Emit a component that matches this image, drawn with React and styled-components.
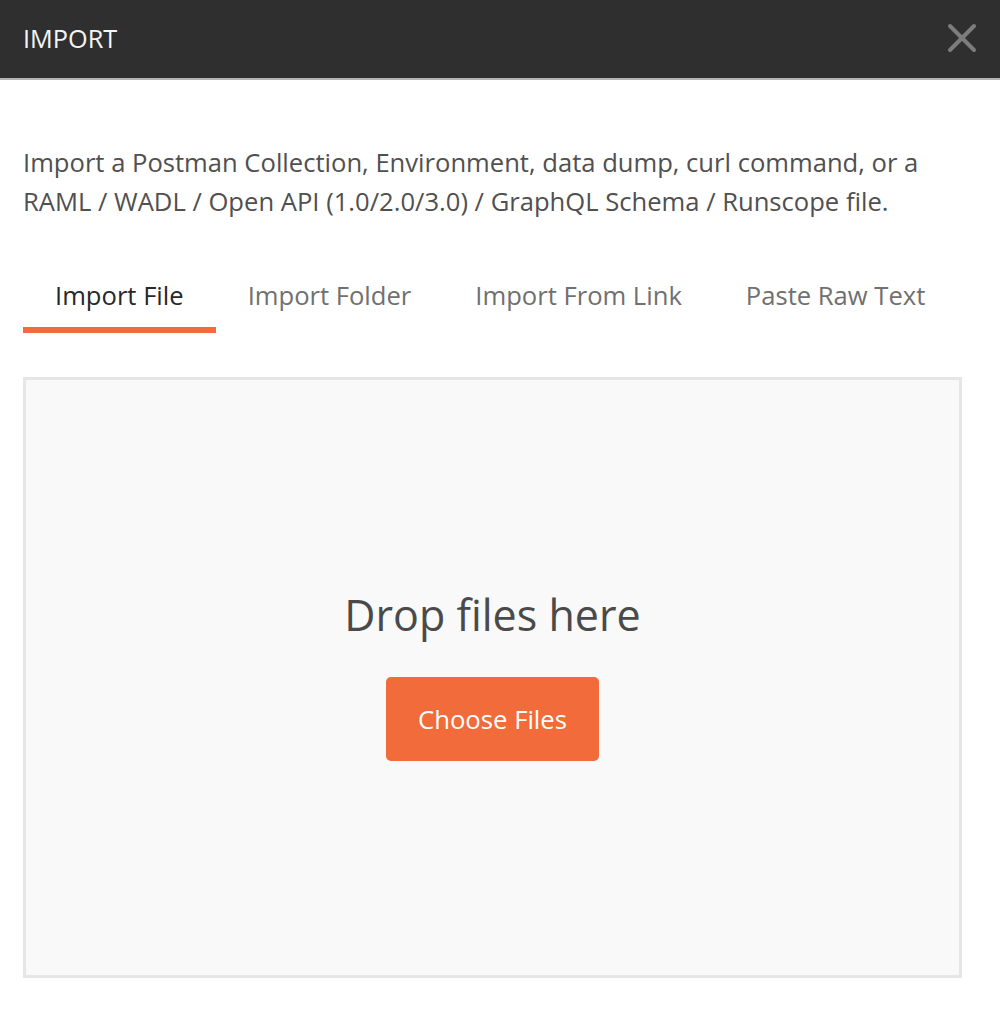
import React from "react";
import styled, { createGlobalStyle } from "styled-components";

const Global = createGlobalStyle`
  html, body { margin: 0; padding: 0; background: #ffffff; }
  body { font-family: "Open Sans", "Noto Sans", sans-serif; }
  * { box-sizing: border-box; }
`;

const Modal = styled.div`
  width: 1000px;
  height: 1019px;
  background: #ffffff;
  display: flex;
  flex-direction: column;
`;

const Header = styled.header`
  height: 80px;
  background: #2f2f2f;
  border-bottom: 2px solid #b4b4b4;
  display: flex;
  align-items: center;
  justify-content: space-between;
  padding: 0 16px 3px 23px;
`;

const Title = styled.h1`
  margin: 0;
  font-size: 25.3px;
  font-weight: 400;
  color: #f4f4f4;
`;

const CloseButton = styled.button`
  width: 44px;
  height: 44px;
  padding: 0;
  border: none;
  background: transparent;
  display: flex;
  align-items: center;
  justify-content: center;
  cursor: pointer;
`;

const Body = styled.div`
  padding: 0 38px 0 23px;
  display: flex;
  flex-direction: column;
`;

const Intro = styled.p`
  margin: 63px 0 0;
  font-size: 25.6px;
  line-height: 39px;
  color: #505050;
`;

const Tabs = styled.div`
  display: flex;
  margin-top: 42px;
`;

const Tab = styled.div`
  padding: 0 32px;
  height: 70px;
  line-height: 66px;
  font-size: 25.6px;
  color: ${(p) => (p.$active ? "#282828" : "#707070")};
  border-bottom: 6px solid ${(p) => (p.$active ? "#f26b3a" : "transparent")};
  cursor: pointer;
`;

const DropZone = styled.div`
  margin-top: 44px;
  height: 601px;
  background: #f9f9f9;
  border: 3px solid #e6e6e6;
  display: flex;
  flex-direction: column;
  align-items: center;
  justify-content: center;
  padding-bottom: 8px;
`;

const DropText = styled.div`
  font-size: 43px;
  line-height: 58px;
  color: #4a4a4a;
  margin-bottom: 33px;
`;

const ChooseButton = styled.button`
  width: 213px;
  height: 84px;
  border: none;
  border-radius: 5px;
  background: #f26b3a;
  color: #ffffff;
  font-family: "Open Sans", "Noto Sans", sans-serif;
  font-size: 25.7px;
  cursor: pointer;
`;

const tabs = ["Import File", "Import Folder", "Import From Link", "Paste Raw Text"];

export default function App() {
  return (
    <>
      <Global />
      <Modal>
        <Header>
          <Title>IMPORT</Title>
          <CloseButton aria-label="Close">
            <svg width="30" height="30" viewBox="0 0 30 30">
              <path
                d="M3 3 L27 27 M27 3 L3 27"
                stroke="#7c7c7c"
                strokeWidth="4"
                strokeLinecap="round"
                fill="none"
              />
            </svg>
          </CloseButton>
        </Header>
        <Body>
          <Intro>
            Import a Postman Collection, Environment, data dump, curl command, or a RAML / WADL / Open API
            (1.0/2.0/3.0) / GraphQL Schema / Runscope file.
          </Intro>
          <Tabs>
            {tabs.map((t, i) => (
              <Tab key={t} $active={i === 0}>
                {t}
              </Tab>
            ))}
          </Tabs>
          <DropZone>
            <DropText>Drop files here</DropText>
            <ChooseButton>Choose Files</ChooseButton>
          </DropZone>
        </Body>
      </Modal>
    </>
  );
}
